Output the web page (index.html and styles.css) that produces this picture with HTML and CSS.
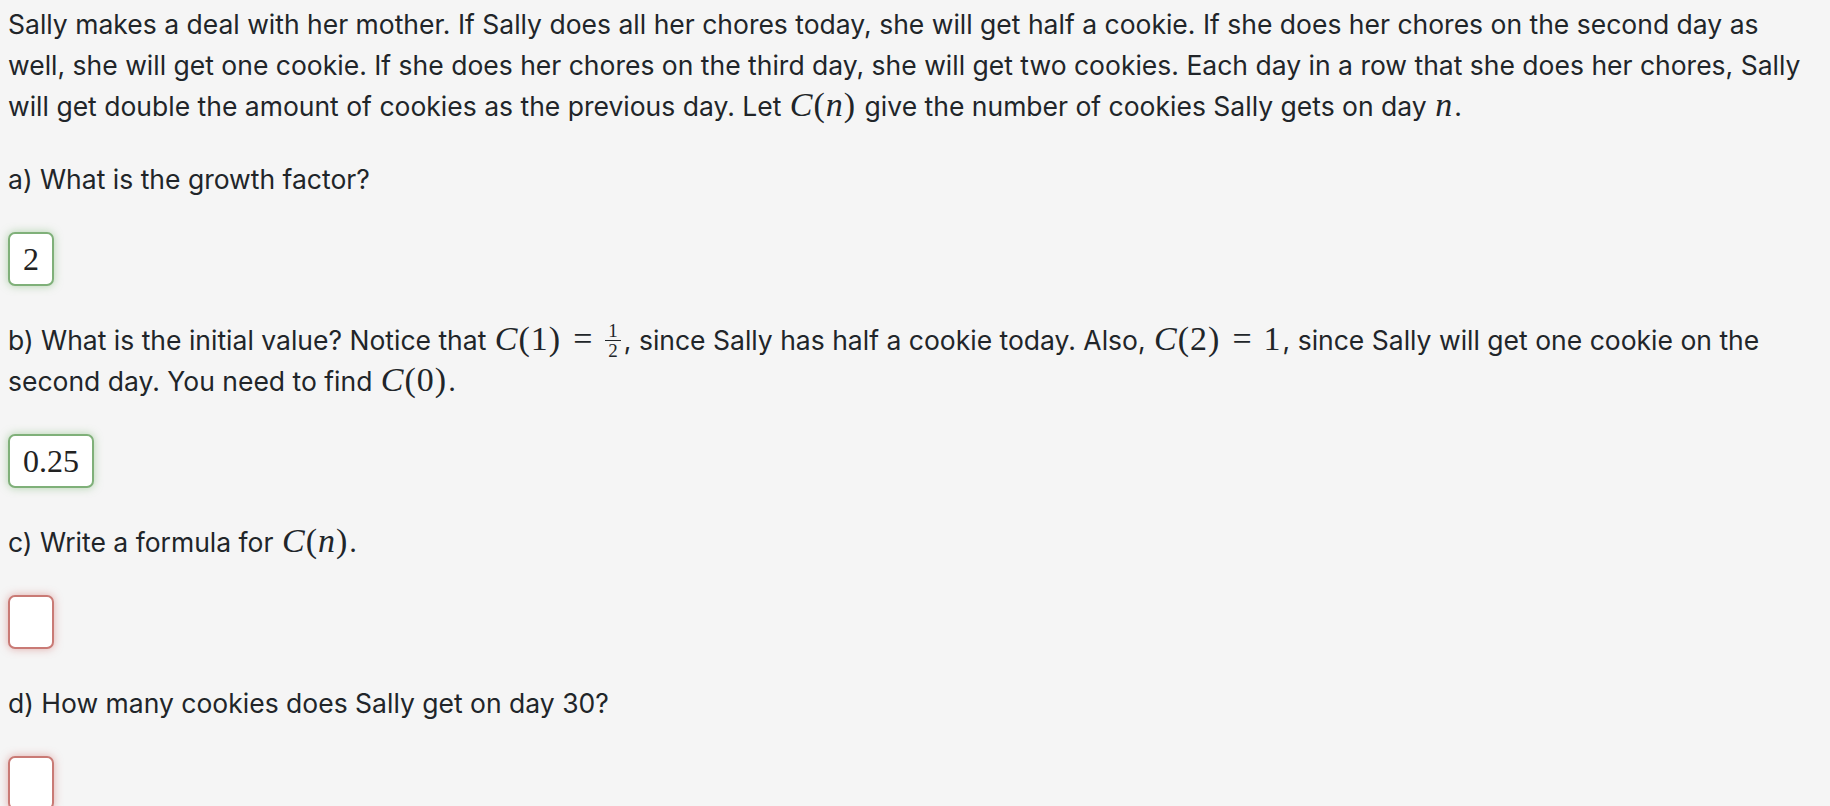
FILE: index.html
```html
<!DOCTYPE html>
<html lang="en">
<head>
<meta charset="utf-8">
<title>Sally's cookies</title>
<link rel="stylesheet" href="styles.css">
</head>
<body>
<main class="page">
  <p class="text">Sally makes a deal with her mother. If Sally does all her chores today, she will get half a cookie. If she does her chores on the second day as well, she will get one cookie. If she does her chores on the third day, she will get two cookies. Each day in a row that she does her chores, Sally will get double the amount of cookies as the previous day. Let <span class="math"><i>C</i>(<i>n</i>)</span> give the number of cookies Sally gets on day <span class="math"><i>n</i></span>.</p>

  <p class="text">a) What is the growth factor?</p>
  <div class="answer correct">2</div>

  <p class="text">b) What is the initial value? Notice that <span class="math"><i>C</i>(1)<span class="rel">=</span><span class="frac"><span class="num">1</span><span class="den">2</span></span></span>, since Sally has half a cookie today. Also, <span class="math"><i>C</i>(2)<span class="rel">=</span>1</span>, since Sally will get one cookie on the second day. You need to find <span class="math"><i>C</i>(0)</span>.</p>
  <div class="answer correct">0.25</div>

  <p class="text">c) Write a formula for <span class="math"><i>C</i>(<i>n</i>)</span>.</p>
  <div class="answer wrong"></div>

  <p class="text">d) How many cookies does Sally get on day 30?</p>
  <div class="answer wrong"></div>
</main>
</body>
</html>
```

FILE: styles.css
```css
html, body {
  margin: 0;
  padding: 0;
  background: #f5f5f5;
}

body {
  font-family: Inter, "Noto Sans", "Liberation Sans", sans-serif;
  color: #212529;
  font-size: 26.5px;
  line-height: 41px;
}

.page {
  padding: 4px 12px 0 8px;
  display: flex;
  flex-direction: column;
  align-items: flex-start;
}

.text {
  margin: 0 0 32px 0;
}

.math {
  font-family: "Liberation Serif", "Times New Roman", serif;
  font-size: 34px;
  line-height: 1;
  letter-spacing: 1px;
  white-space: nowrap;
  padding: 0 1px;
}

.math i {
  font-style: italic;
}

.rel {
  margin: 0 11px 0 12px;
}

.frac {
  display: inline-flex;
  flex-direction: column;
  align-items: center;
  font-size: 19px;
  line-height: 14px;
  letter-spacing: 0;
  vertical-align: 13px;
  margin: 0 2px 0 1px;
}

.frac .num {
  border-bottom: 1px solid #212529;
  padding: 0 3px 2px;
}

.frac .den {
  padding-top: 3px;
}

.answer {
  box-sizing: border-box;
  min-width: 46px;
  height: 54px;
  padding: 0 13px;
  margin-bottom: 34px;
  display: flex;
  align-items: center;
  justify-content: center;
  background: #ffffff;
  border: 2px solid;
  border-radius: 7px;
  font-family: "Liberation Serif", "Times New Roman", serif;
  font-size: 32px;
  color: #222;
}

.correct {
  border-color: #7fb079;
  box-shadow: 0 0 8px rgba(110, 175, 100, 0.5);
}

.wrong {
  border-color: #c97a75;
  box-shadow: 0 0 8px rgba(205, 100, 95, 0.5);
}
```
